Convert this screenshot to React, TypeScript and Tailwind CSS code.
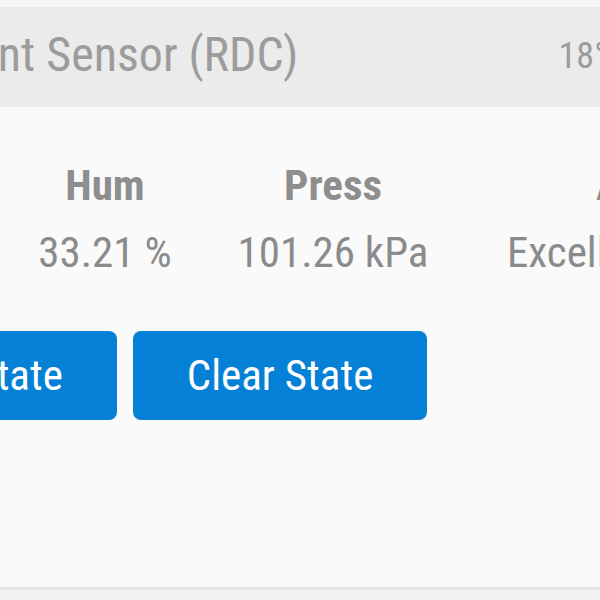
import React from 'react';

const font = { fontFamily: '"Roboto Condensed", Roboto, "Liberation Sans", sans-serif' };

export default function App() {
  const readings = [
    { label: 'Temp', value: '18.42 °C' },
    { label: 'Hum', value: '33.21 %' },
    { label: 'Press', value: '101.26 kPa' },
  ];

  return (
    <div className="w-[600px] h-[600px] overflow-hidden bg-[#f2f2f2]" style={font}>
      <div className="h-[7px] bg-[#f6f6f6]" />
      <div className="-ml-[229px] w-[881px] bg-[#fafafa] border-b-[3px] border-[#e6e6e6]">
        <div className="h-[100px] bg-[#ebebeb] pl-7 pr-6 flex items-center justify-between">
          <span className="text-[48px] leading-none text-[#9c9c9c] mb-[5px]">Environment Sensor (RDC)</span>
          <span className="text-[36px] leading-none text-[#9c9c9c] mb-[3px]">18°C</span>
        </div>

        <div className="pt-[57px] flex">
          {readings.map((r, i) => (
            <div
              key={r.label}
              className={i === 0 ? 'w-[220px] shrink-0 flex flex-col items-center' : 'w-[228px] shrink-0 flex flex-col items-center'}
            >
              <span className="text-[43px] leading-none font-bold text-[#8e8e8e]">{r.label}</span>
              <span className="mt-[24px] text-[43px] leading-none text-[#8b8b8b]">{r.value}</span>
            </div>
          ))}
          <div className="pl-[60px] shrink-0 flex flex-col items-start">
            <span className="ml-[89px] text-[43px] leading-none font-bold text-[#8e8e8e]">AQI</span>
            <span className="mt-[24px] text-[43px] leading-none text-[#8b8b8b]">Excellent</span>
          </div>
        </div>

        <div className="mt-[57px] pl-[44px] pb-[167px] flex gap-4">
          <button className="h-[89px] px-[54px] rounded-lg bg-[#0480d7] text-white text-[43px] leading-none">Reset State</button>
          <button className="h-[89px] px-[54px] rounded-lg bg-[#0480d7] text-white text-[43px] leading-none">Clear State</button>
        </div>
      </div>
    </div>
  );
}
